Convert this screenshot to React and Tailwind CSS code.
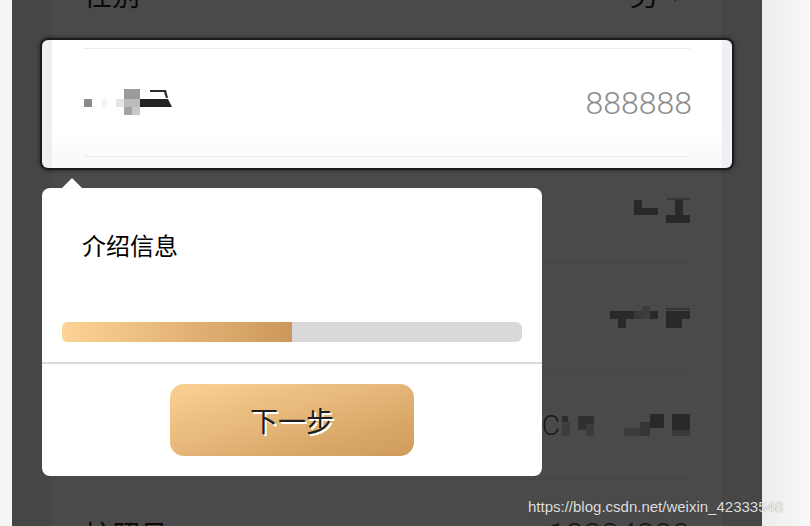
import { ChevronRight } from "lucide-react";

const cjk = { fontFamily: '"Noto Sans CJK SC", "Noto Sans", sans-serif' };
const num = { fontFamily: 'Roboto, "Liberation Sans", sans-serif' };

function Row({ left, right, children }) {
  return (
    <div className="mx-8 h-[108px] border-b border-[#ececef] flex items-center justify-between">
      <div className="text-[28px] text-[#222]" style={cjk}>
        {left}
      </div>
      <div className="flex items-center">{right || children}</div>
    </div>
  );
}

// pixelated (mosaic) blocks that hide personal info in the original shot
function NameMosaic() {
  return (
    <svg width="90" height="28" viewBox="0 0 90 28">
      <rect x="0" y="10" width="8" height="8" fill="#8a8a8a" />
      <rect x="18" y="10" width="5" height="8" fill="#f3f3f3" />
      <rect x="32" y="10" width="8" height="8" fill="#e4e4e4" />
      <rect x="40" y="0" width="16" height="10" fill="#9b9b9b" />
      <rect x="40" y="10" width="16" height="8" fill="#bcbcbc" />
      <rect x="40" y="18" width="8" height="8" fill="#a3a3a3" />
      <rect x="48" y="18" width="8" height="8" fill="#c8c8c8" />
      <polygon points="56,10 84,10 88,18 56,18" fill="#242424" />
      <polygon points="66,1 82,1 84,9 82,9 80,3 66,3" fill="#2a2a2a" />
    </svg>
  );
}

function MosaicA() {
  return (
    <svg width="56" height="28" viewBox="0 0 56 28">
      <rect x="0" y="4" width="8" height="15" fill="#8c8c8c" />
      <rect x="0" y="12" width="24" height="7" fill="#8c8c8c" />
      <rect x="33" y="2" width="23" height="2" fill="#bdbdbd" />
      <rect x="41" y="4" width="8" height="15" fill="#8c8c8c" />
      <rect x="32" y="19" width="24" height="8" fill="#8c8c8c" />
    </svg>
  );
}

function MosaicB() {
  return (
    <svg width="80" height="24" viewBox="0 0 80 24">
      <rect x="0" y="5" width="24" height="8" fill="#8c8c8c" />
      <rect x="8" y="13" width="8" height="9" fill="#8c8c8c" />
      <rect x="24" y="5" width="8" height="8" fill="#c4c4c4" />
      <rect x="32" y="0" width="8" height="13" fill="#d0d0d0" />
      <rect x="40" y="5" width="8" height="8" fill="#8e8e8e" />
      <rect x="56" y="2" width="24" height="2" fill="#b8b8b8" />
      <rect x="56" y="5" width="24" height="8" fill="#8c8c8c" />
      <rect x="56" y="13" width="16" height="9" fill="#8c8c8c" />
    </svg>
  );
}

function MosaicC() {
  return (
    <svg width="128" height="24" viewBox="0 0 128 24">
      <rect x="0" y="2" width="6" height="6" fill="#9a9a9a" />
      <rect x="0" y="8" width="8" height="14" fill="#d6d6d6" />
      <rect x="16" y="2" width="16" height="14" fill="#a6a6a6" />
      <rect x="24" y="10" width="8" height="12" fill="#c8c8c8" />
      <rect x="62" y="14" width="16" height="8" fill="#cfcfcf" />
      <rect x="78" y="8" width="10" height="14" fill="#b5b5b5" />
      <rect x="88" y="0" width="14" height="14" fill="#8c8c8c" />
      <rect x="110" y="0" width="18" height="16" fill="#8f8f8f" />
      <rect x="110" y="16" width="18" height="6" fill="#c4c4c4" />
    </svg>
  );
}

function Highlight() {
  return (
    <div className="absolute left-[30px] top-[40px] w-[690px] h-[128px] rounded-[6px] bg-[#eff0f3] shadow-[0_0_0_2px_#1c1c1c,0_0_4px_2px_rgba(0,0,0,0.55)] overflow-hidden">
      <div className="mx-[10px] h-full bg-gradient-to-b from-white from-70% to-[#f8f8f8] pt-2">
        <div className="mx-8 h-[109px] border-y border-[#ececef] flex items-center justify-between">
          <NameMosaic />
          <div className="text-[32px] font-light text-[#8e8e8e] mr-[-2px]" style={num}>
            888888
          </div>
        </div>
      </div>
    </div>
  );
}

function Tooltip() {
  return (
    <div className="absolute left-[30px] top-[188px] w-[500px] rounded-lg bg-white" style={cjk}>
      <div className="absolute -top-[10px] left-[20px] w-0 h-0 border-x-[10px] border-x-transparent border-b-[10px] border-b-white" />
      <div className="pl-10 pt-[44px] text-[24px] leading-[26px] text-black">介绍信息</div>
      <div className="mx-5 mt-[64px] h-5 rounded-md bg-[#d9d9d9] overflow-hidden">
        <div className="w-1/2 h-full bg-gradient-to-r from-[#fdd396] to-[#cc9859]" />
      </div>
      <div className="mt-5 h-[2px] bg-[#dadada]" />
      <div className="flex justify-center py-5">
        <button className="w-[244px] h-[72px] rounded-[14px] bg-gradient-to-br from-[#fbd193] to-[#cd9a5a] text-[28px] text-[#1e1e1e] [text-shadow:2px_2px_0_#fff]">
          下一步
        </button>
      </div>
    </div>
  );
}

export default function App() {
  return (
    <div className="flex h-[526px] w-[810px] overflow-hidden bg-[#f5f5f5]">
      <div className="w-[12px] shrink-0 bg-[#f5f5f5]" />
      <div className="relative w-[750px] shrink-0 overflow-hidden bg-[#eff0f3]">
        <div className="mx-10 -mt-[60px] bg-white">
          <Row
            left="性别"
            right={
              <div className="flex items-center text-[28px] text-[#222]" style={cjk}>
                男
                <ChevronRight size={24} strokeWidth={1.5} className="ml-2 text-[#111]" />
              </div>
            }
          />
          <Row left={<NameMosaic />}>
            <div className="text-[32px] font-light text-[#8e8e8e]" style={num}>
              888888
            </div>
          </Row>
          <Row left="姓名">
            <MosaicA />
          </Row>
          <Row left="民族">
            <MosaicB />
          </Row>
          <Row left="证件类型">
            <span className="text-[28px] font-light text-[#555] mr-[2px]" style={num}>
              DC
            </span>
            <MosaicC />
          </Row>
          <Row left="护照号">
            <div className="text-[32px] font-light text-[#555]" style={num}>
              12334322
            </div>
          </Row>
        </div>
        <div className="absolute inset-0 bg-black/[0.71]" />
        <Highlight />
        <Tooltip />
      </div>
      <div className="flex-1 bg-gradient-to-r from-[#ececec] to-[#f8f8f8]" />
      <div
        className="absolute left-[528px] top-[496px] text-[15px] text-white/85 [text-shadow:0_0_1px_rgba(0,0,0,0.5)]"
        style={{ fontFamily: '"Liberation Sans", Arial, sans-serif' }}
      >
        https://blog.csdn.net/weixin_42333548
      </div>
    </div>
  );
}
